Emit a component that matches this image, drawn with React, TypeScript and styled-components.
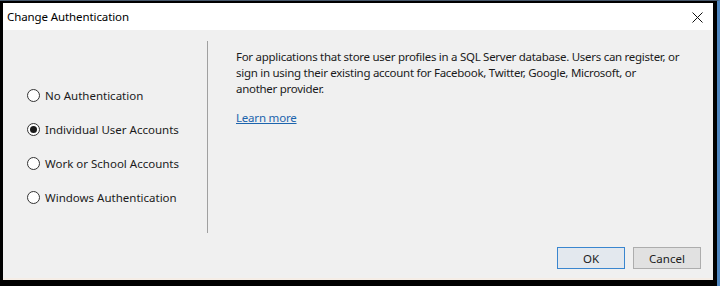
import React, { useState } from "react";
import styled, { createGlobalStyle } from "styled-components";

const GlobalStyle = createGlobalStyle`
  html, body {
    margin: 0;
    padding: 0;
    background: #000;
  }
  body {
    font-family: "Noto Sans", "Open Sans", sans-serif;
    font-size: 11.5px;
    color: #1b1b1b;
  }
`;

const OPTIONS = [
  "No Authentication",
  "Individual User Accounts",
  "Work or School Accounts",
  "Windows Authentication",
];

export default function App() {
  const [selected, setSelected] = useState(1);

  return (
    <>
      <GlobalStyle />
      <Screen>
        <Dialog>
          <TitleBar>
            <Title>Change Authentication</Title>
            <CloseButton aria-label="Close">
              <svg width="11" height="11" viewBox="0 0 11 11">
                <path d="M0.5 0.5 L10.5 10.5 M10.5 0.5 L0.5 10.5" stroke="#111" strokeWidth="1" />
              </svg>
            </CloseButton>
          </TitleBar>
          <Body>
            <Content>
              <OptionList>
                {OPTIONS.map((label, i) => (
                  <Option key={label} onClick={() => setSelected(i)}>
                    <RadioCircle $checked={selected === i} />
                    <OptionLabel>{label}</OptionLabel>
                  </Option>
                ))}
              </OptionList>
              <Description>
                <Paragraph>
                  For applications that store user profiles in a SQL Server database. Users can register, or
                  <br />
                  sign in using their existing account for Facebook, Twitter, Google, Microsoft, or
                  <br />
                  another provider.
                </Paragraph>
                <LearnMore href="#">Learn more</LearnMore>
              </Description>
            </Content>
            <Footer>
              <Button $primary>OK</Button>
              <Button>Cancel</Button>
            </Footer>
          </Body>
        </Dialog>
      </Screen>
    </>
  );
}

const Screen = styled.div`
  width: 720px;
  height: 286px;
  box-sizing: border-box;
  background: #000;
  border-top: 1px solid #46576a;
  border-right: 3px solid #4f86bf;
  padding: 2px 4px 6px 3px;
  display: flex;
`;

const Dialog = styled.div`
  flex: 1;
  min-width: 0;
  display: flex;
  flex-direction: column;
  background: #f0f0f0;
  border-bottom: 2px solid #f5ede6;
  overflow: hidden;
`;

const TitleBar = styled.div`
  height: 27px;
  background: #fff;
  display: flex;
  align-items: center;
  justify-content: space-between;
  padding: 0 6px 0 4px;
`;

const Title = styled.span`
  font-size: 11.5px;
  letter-spacing: -0.1px;
  color: #000;
`;

const CloseButton = styled.div`
  width: 14px;
  height: 14px;
  display: flex;
  align-items: center;
  justify-content: center;
  margin-right: 3px;
  margin-top: 1px;
`;

const Body = styled.div`
  flex: 1;
  min-width: 0;
  display: flex;
  flex-direction: column;
  padding: 11px 12px 9px 0;
`;

const Content = styled.div`
  height: 192px;
  display: flex;
  min-width: 0;
`;

const OptionList = styled.div`
  width: 205px;
  flex: none;
  border-right: 1px solid #a0a0a0;
  padding: 37px 0 0 24px;
  box-sizing: border-box;
  display: flex;
  flex-direction: column;
`;

const Option = styled.label`
  height: 34px;
  display: flex;
  align-items: center;
  gap: 5px;
  cursor: default;
`;

const RadioCircle = styled.span<{ $checked?: boolean }>`
  width: 13px;
  height: 13px;
  box-sizing: border-box;
  border: 1px solid #333;
  border-radius: 50%;
  background: #fff;
  display: flex;
  align-items: center;
  justify-content: center;
  flex: none;

  &::after {
    content: "";
    width: 7px;
    height: 7px;
    border-radius: 50%;
    background: ${(p) => (p.$checked ? "#1b1b1b" : "transparent")};
  }
`;

const OptionLabel = styled.span`
  font-size: 11.5px;
  color: #1b1b1b;
`;

const Description = styled.div`
  flex: 1;
  min-width: 0;
  padding: 8px 0 0 28px;
  display: flex;
  flex-direction: column;
  align-items: flex-start;
`;

const Paragraph = styled.p`
  margin: 0;
  font-size: 11.5px;
  line-height: 16px;
  letter-spacing: -0.28px;
  color: #1b1b1b;
  white-space: nowrap;
`;

const LearnMore = styled.a`
  margin-top: 13px;
  font-size: 11.5px;
  line-height: 16px;
  letter-spacing: -0.2px;
  color: #1c64ad;
  text-decoration: underline;
`;

const Footer = styled.div`
  margin-top: auto;
  display: flex;
  justify-content: flex-end;
  gap: 8px;
`;

const Button = styled.button<{ $primary?: boolean }>`
  width: 68px;
  height: 22px;
  box-sizing: border-box;
  font-family: "Noto Sans", "Open Sans", sans-serif;
  font-size: 11.5px;
  color: #1b1b1b;
  padding: 0;
  background: ${(p) => (p.$primary ? "#e3e8ee" : "#e1e1e1")};
  border: 1px solid ${(p) => (p.$primary ? "#3a86cf" : "#adadad")};
`;
